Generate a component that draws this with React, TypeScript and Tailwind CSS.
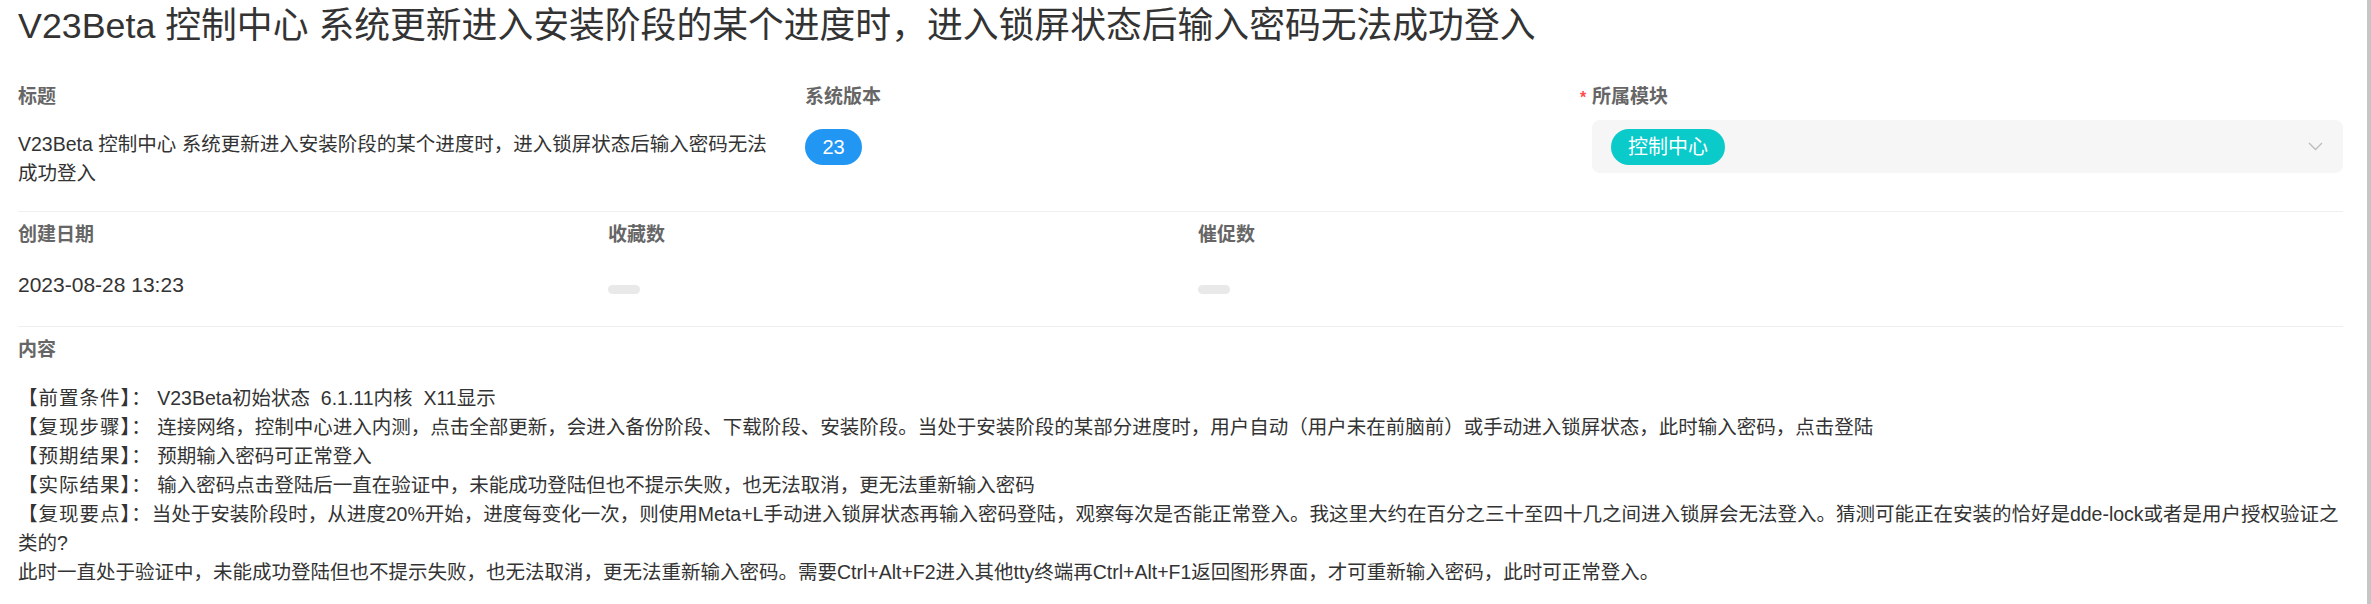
import React from "react";

const FONT = "font-['Liberation_Sans','Noto_Sans_CJK_SC',sans-serif]";

function Label({ children, required }: { children: React.ReactNode; required?: boolean }) {
  return (
    <div className="relative h-[26px] text-[19px] leading-[26px] font-semibold text-[#666666]">
      {required && (
        <span className="absolute left-[-12px] top-[1px] text-[16px] text-[#ff4d4f]">*</span>
      )}
      {children}
    </div>
  );
}

function Skeleton() {
  return <div className="h-[9px] w-[32px] rounded-full bg-[#e9e9e9] mt-[10px]" />;
}

const contentLines: { head?: string; body: string }[] = [
  { head: "【前置条件】：", body: " V23Beta初始状态  6.1.11内核  X11显示" },
  {
    head: "【复现步骤】：",
    body: " 连接网络，控制中心进入内测，点击全部更新，会进入备份阶段、下载阶段、安装阶段。当处于安装阶段的某部分进度时，用户自动（用户未在前脑前）或手动进入锁屏状态，此时输入密码，点击登陆",
  },
  { head: "【预期结果】：", body: " 预期输入密码可正常登入" },
  {
    head: "【实际结果】：",
    body: " 输入密码点击登陆后一直在验证中，未能成功登陆但也不提示失败，也无法取消，更无法重新输入密码",
  },
  {
    head: "【复现要点】：",
    body: "当处于安装阶段时，从进度20%开始，进度每变化一次，则使用Meta+L手动进入锁屏状态再输入密码登陆，观察每次是否能正常登入。我这里大约在百分之三十至四十几之间进入锁屏会无法登入。猜测可能正在安装的恰好是dde-lock或者是用户授权验证之类的?",
  },
  {
    body: "此时一直处于验证中，未能成功登陆但也不提示失败，也无法取消，更无法重新输入密码。需要Ctrl+Alt+F2进入其他tty终端再Ctrl+Alt+F1返回图形界面，才可重新输入密码，此时可正常登入。",
  },
];

export default function App() {
  return (
    <div className={`${FONT} flex min-h-[604px] w-full bg-white text-[#333333]`}>
      <div className="flex-1 pl-[18px] pr-[24px]">
        <h1 className="h-[52px] text-[35.8px] leading-[52px] font-normal text-[#333333] whitespace-nowrap">
          V23Beta 控制中心 系统更新进入安装阶段的某个进度时，进入锁屏状态后输入密码无法成功登入
        </h1>

        {/* Row 1 */}
        <div className="mt-[32px] grid grid-cols-3 gap-x-[36px] pb-[13px]">
          <div>
            <Label>标题</Label>
            <div className="mt-[10px] mr-[-12px] py-[10px] text-[19.5px] leading-[29px] text-[#333333]">
              V23Beta 控制中心 系统更新进入安装阶段的某个进度时，进入锁屏状态后输入密码无法成功登入
            </div>
          </div>
          <div>
            <Label>系统版本</Label>
            <div className="mt-[10px] flex h-[53px] items-center">
              <span className="flex h-[36px] w-[57px] items-center justify-center rounded-full bg-[#2196f3] text-[20px] text-white">
                23
              </span>
            </div>
          </div>
          <div>
            <Label required>所属模块</Label>
            <div className="mt-[10px] flex h-[53px] items-center justify-between rounded-[8px] bg-[#f6f6f6] pl-[19px] pr-[20px]">
              <span className="flex h-[36px] items-center rounded-full bg-[#0acaca] px-[17px] text-[20px] text-white">
                控制中心
              </span>
              <svg width="15" height="9" viewBox="0 0 15 9" fill="none">
                <polyline points="1,1 7.5,7.5 14,1" stroke="#bdbdbd" strokeWidth="1.4" fill="none" />
              </svg>
            </div>
          </div>
        </div>

        <div className="h-px bg-[#efefef]" />

        {/* Row 2 */}
        <div className="grid grid-cols-4 gap-x-[35px] pt-[10px] pb-[15px]">
          <div>
            <Label>创建日期</Label>
            <div className="mt-[10px] flex h-[53px] items-center text-[21px] text-[#333333]">
              2023-08-28 13:23
            </div>
          </div>
          <div>
            <Label>收藏数</Label>
            <div className="mt-[10px] flex h-[53px] items-center">
              <Skeleton />
            </div>
          </div>
          <div>
            <Label>催促数</Label>
            <div className="mt-[10px] flex h-[53px] items-center">
              <Skeleton />
            </div>
          </div>
          <div />
        </div>

        <div className="h-px bg-[#efefef]" />

        {/* Content */}
        <div className="pt-[10px]">
          <Label>内容</Label>
          <div className="mt-[21px] text-[19.5px] leading-[29px] text-[#333333]">
            {contentLines.map((line, i) => (
              <p key={i} className="whitespace-pre-wrap break-words">
                {line.head && <span className="tracking-[1px]">{line.head}</span>}
                {line.body}
              </p>
            ))}
          </div>
        </div>
      </div>
      <div className="w-[4px] shrink-0 bg-[#c6c6c6]" />
    </div>
  );
}
